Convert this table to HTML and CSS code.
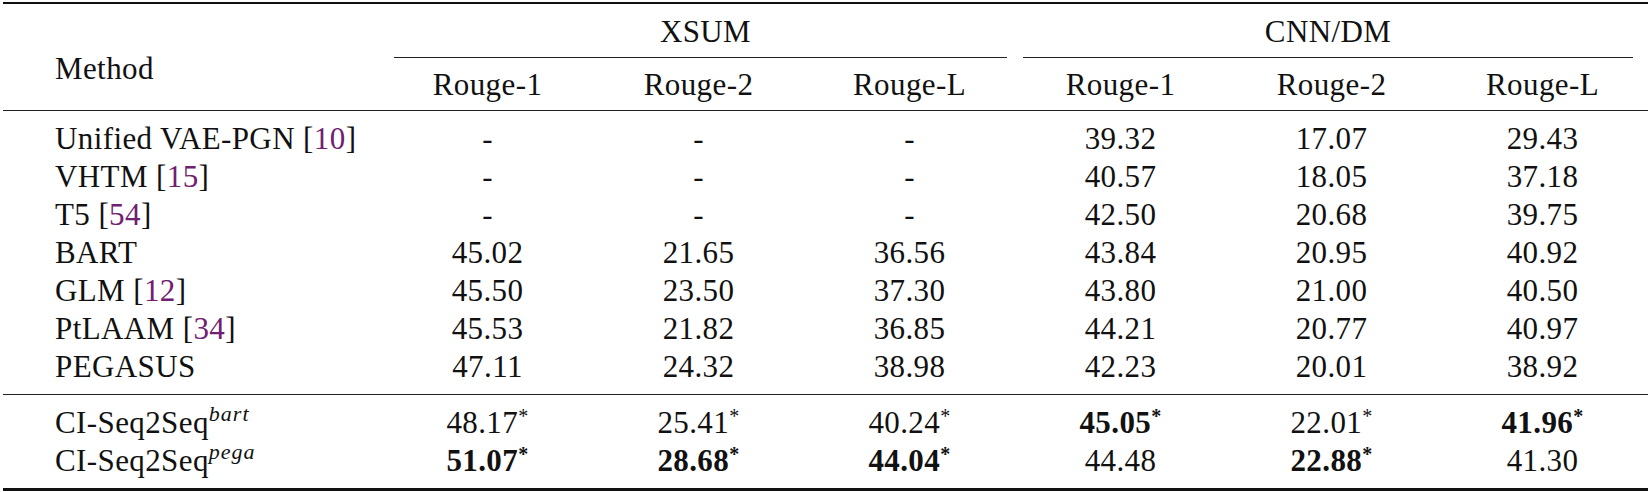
FILE: index.html
```html
<!DOCTYPE html>
<html lang="en">
<head>
    <meta charset="UTF-8">
    <title>Rouge results</title>
    <link rel="stylesheet" href="styles.css">
</head>
<body>
    <div class="wrap">
        <table class="results">
            <colgroup>
                <col class="col-method">
                <col class="col-num"><col class="col-num"><col class="col-num">
                <col class="col-num"><col class="col-num"><col class="col-num">
            </colgroup>
            <thead>
                <tr class="head-top">
                    <th class="method" rowspan="2">Method</th>
                    <th colspan="3"><div class="group group-xsum">XSUM</div></th>
                    <th colspan="3"><div class="group group-cnn">CNN/DM</div></th>
                </tr>
                <tr class="head-sub">
                    <th>Rouge-1</th><th>Rouge-2</th><th>Rouge-L</th>
                    <th>Rouge-1</th><th>Rouge-2</th><th>Rouge-L</th>
                </tr>
            </thead>
            <tbody>
                <tr class="first">
                    <td class="name">Unified VAE-PGN [<span class="cite">10</span>]</td>
                    <td>-</td><td>-</td><td>-</td><td>39.32</td><td>17.07</td><td>29.43</td>
                </tr>
                <tr>
                    <td class="name">VHTM [<span class="cite">15</span>]</td>
                    <td>-</td><td>-</td><td>-</td><td>40.57</td><td>18.05</td><td>37.18</td>
                </tr>
                <tr>
                    <td class="name">T5 [<span class="cite">54</span>]</td>
                    <td>-</td><td>-</td><td>-</td><td>42.50</td><td>20.68</td><td>39.75</td>
                </tr>
                <tr>
                    <td class="name">BART</td>
                    <td>45.02</td><td>21.65</td><td>36.56</td><td>43.84</td><td>20.95</td><td>40.92</td>
                </tr>
                <tr>
                    <td class="name">GLM [<span class="cite">12</span>]</td>
                    <td>45.50</td><td>23.50</td><td>37.30</td><td>43.80</td><td>21.00</td><td>40.50</td>
                </tr>
                <tr>
                    <td class="name">PtLAAM [<span class="cite">34</span>]</td>
                    <td>45.53</td><td>21.82</td><td>36.85</td><td>44.21</td><td>20.77</td><td>40.97</td>
                </tr>
                <tr class="last">
                    <td class="name">PEGASUS</td>
                    <td>47.11</td><td>24.32</td><td>38.98</td><td>42.23</td><td>20.01</td><td>38.92</td>
                </tr>
                <tr class="first ours">
                    <td class="name">CI-Seq2Seq<span class="variant">bart</span></td>
                    <td>48.17<span class="star">*</span></td>
                    <td>25.41<span class="star">*</span></td>
                    <td>40.24<span class="star">*</span></td>
                    <td><b>45.05<span class="star">*</span></b></td>
                    <td>22.01<span class="star">*</span></td>
                    <td><b>41.96<span class="star">*</span></b></td>
                </tr>
                <tr class="last">
                    <td class="name">CI-Seq2Seq<span class="variant">pega</span></td>
                    <td><b>51.07<span class="star">*</span></b></td>
                    <td><b>28.68<span class="star">*</span></b></td>
                    <td><b>44.04<span class="star">*</span></b></td>
                    <td>44.48</td>
                    <td><b>22.88<span class="star">*</span></b></td>
                    <td>41.30</td>
                </tr>
            </tbody>
        </table>
    </div>
</body>
</html>
```

FILE: styles.css
```css
body {
    margin: 0;
    background: #fff;
    color: #111;
    font-family: "Liberation Serif", "Tinos", "Times New Roman", "DejaVu Serif", serif;
    font-size: 31px;
    letter-spacing: 0.4px;
}
.wrap {
    padding: 2px 3px 0 3px;
}
.results {
    width: 1645px;
    table-layout: fixed;
    border-collapse: collapse;
    border-top: 2px solid #111;
    border-bottom: 3px solid #111;
    font-family: inherit;
}
.col-method {
    width: 379px;
}
.col-num {
    width: 211px;
}
th, td {
    padding: 0;
    font-family: inherit;
    font-weight: normal;
    text-align: center;
    line-height: 38px;
    white-space: nowrap;
}
.head-top th {
    padding: 0;
    line-height: 35px;
}
.head-top th.method {
    text-align: left;
    vertical-align: top;
    padding: 47px 0 0 52px;
    border-bottom: 1px solid #222;
}
.group {
    padding: 10px 0 8px;
    border-bottom: 1px solid #222;
}
.group-xsum {
    margin: 0 8px 0 12px;
    padding-left: 10px;
}
.group-cnn {
    margin: 0 15px 0 8px;
}
.head-sub th {
    line-height: 35px;
    padding: 9px 0 8px;
    border-bottom: 1px solid #222;
}
td.name {
    text-align: left;
    padding-left: 52px;
}
tr.first td {
    padding-top: 9px;
}
tr.last td {
    padding-bottom: 8px;
}
tr.ours td {
    border-top: 1px solid #222;
}
.cite {
    color: #70206f;
}
.variant {
    font-style: italic;
    font-size: 22px;
    vertical-align: 12px;
    line-height: 0;
    letter-spacing: 1px;
}
.star {
    font-size: 20px;
    vertical-align: 10px;
    line-height: 0;
    font-weight: normal;
}
b .star {
    font-weight: bold;
}
```
